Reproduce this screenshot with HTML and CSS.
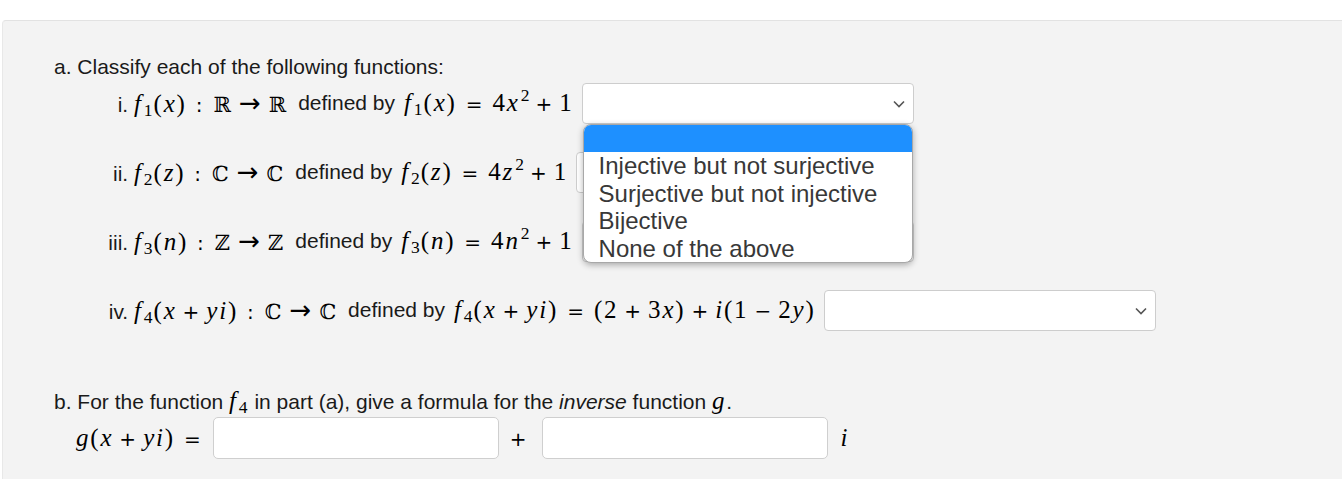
FILE: index.html
```html
<!DOCTYPE html>
<html lang="en">
<head>
    <meta charset="UTF-8">
    <title>Classify functions</title>
    <link rel="stylesheet" href="styles.css">
</head>
<body>
    <div class="panel">
        <p class="part">a. Classify each of the following functions:</p>
        <ol class="funcs">
            <li>
                <div class="row">
                    <span class="math"><i>f</i><sub>1</sub>(<i>x</i>)<span class="rel">:</span><span class="set">ℝ</span><span class="rel arrow">→</span><span class="set">ℝ</span></span>
                    <span class="word">defined by</span>
                    <span class="math"><i>f</i><sub>1</sub>(<i>x</i>)<span class="rel">=</span>4<i>x</i><sup>2</sup><span class="bin">+</span>1</span>
                    <span class="pick">
                        <select class="choice"><option></option></select>
                        <svg class="chev" width="12" height="8" viewBox="0 0 12 8"><path d="M1 1.5l5 5 5-5" fill="none" stroke="#555" stroke-width="1.6"/></svg>
                        <div class="dropdown">
                            <div class="opt active"></div>
                            <div class="opt">Injective but not surjective</div>
                            <div class="opt">Surjective but not injective</div>
                            <div class="opt">Bijective</div>
                            <div class="opt">None of the above</div>
                        </div>
                    </span>
                </div>
            </li>
            <li>
                <div class="row">
                    <span class="math"><i>f</i><sub>2</sub>(<i>z</i>)<span class="rel">:</span><span class="set">ℂ</span><span class="rel arrow">→</span><span class="set">ℂ</span></span>
                    <span class="word">defined by</span>
                    <span class="math"><i>f</i><sub>2</sub>(<i>z</i>)<span class="rel">=</span>4<i>z</i><sup>2</sup><span class="bin">+</span>1</span>
                    <span class="pick">
                        <select class="choice"><option></option></select>
                        <svg class="chev" width="12" height="8" viewBox="0 0 12 8"><path d="M1 1.5l5 5 5-5" fill="none" stroke="#555" stroke-width="1.6"/></svg>
                    </span>
                </div>
            </li>
            <li>
                <div class="row">
                    <span class="math"><i>f</i><sub>3</sub>(<i>n</i>)<span class="rel">:</span><span class="set">ℤ</span><span class="rel arrow">→</span><span class="set">ℤ</span></span>
                    <span class="word">defined by</span>
                    <span class="math"><i>f</i><sub>3</sub>(<i>n</i>)<span class="rel">=</span>4<i>n</i><sup>2</sup><span class="bin">+</span>1</span>
                    <span class="pick">
                        <select class="choice"><option></option></select>
                        <svg class="chev" width="12" height="8" viewBox="0 0 12 8"><path d="M1 1.5l5 5 5-5" fill="none" stroke="#555" stroke-width="1.6"/></svg>
                    </span>
                </div>
            </li>
            <li>
                <div class="row">
                    <span class="math"><i>f</i><sub>4</sub>(<i>x</i><span class="bin">+</span><i>y</i><i>i</i>)<span class="rel">:</span><span class="set">ℂ</span><span class="rel arrow">→</span><span class="set">ℂ</span></span>
                    <span class="word">defined by</span>
                    <span class="math"><i>f</i><sub>4</sub>(<i>x</i><span class="bin">+</span><i>y</i><i>i</i>)<span class="rel">=</span>(2<span class="bin">+</span>3<i>x</i>)<span class="bin">+</span><i>i</i>(1<span class="bin">−</span>2<i>y</i>)</span>
                    <span class="pick">
                        <select class="choice"><option></option></select>
                        <svg class="chev" width="12" height="8" viewBox="0 0 12 8"><path d="M1 1.5l5 5 5-5" fill="none" stroke="#555" stroke-width="1.6"/></svg>
                    </span>
                </div>
            </li>
        </ol>

        <p class="part part-b">b. For the function <span class="math"><i>f</i><sub>4</sub></span> in part (a), give a formula for the <em>inverse</em> function <span class="math"><i>g</i></span>.</p>
        <div class="answer">
            <span class="math"><i>g</i>(<i>x</i><span class="bin">+</span><i>y</i><i>i</i>)<span class="rel">=</span></span>
            <input class="field first" type="text">
            <span class="math"><span class="bin plus">+</span></span>
            <input class="field" type="text">
            <span class="math unit"><i>i</i></span>
        </div>
    </div>
</body>
</html>
```

FILE: styles.css
```css
body {
    margin: 0;
    background-color: white;
    font-family: "Liberation Sans", Arial, sans-serif;
    font-size: 21px;
    color: #1a1a1a;
}
.panel {
    margin: 20px 1px 0 2px;
    padding: 34px 50px 40px 51px;
    background-color: #f3f3f3;
    border-top: 1px solid #e2e2e2;
    border-left: 1px solid #e8e8e8;
    border-top-left-radius: 4px;
    min-height: 420px;
}
.part {
    margin: 0;
    line-height: 24px;
}
.funcs {
    list-style: lower-roman;
    margin: 4px 0 0 0;
    padding-left: 80px;
}
.funcs li {
    margin-bottom: 29px;
}
.row {
    display: flex;
    align-items: center;
    height: 40px;
}
.word {
    margin: 0 9px 0 11px;
}
.math {
    font-family: "Liberation Serif", "DejaVu Serif", serif;
    font-size: 25px;
    letter-spacing: 1.8px;
    color: #000;
    white-space: nowrap;
}
.math i {
    font-style: italic;
}
.math sub {
    font-size: 70%;
    letter-spacing: 0;
    vertical-align: -0.2em;
    line-height: 0;
    margin: 0 1px 0 1px;
}
.math sup {
    font-size: 70%;
    letter-spacing: 0;
    vertical-align: 0.55em;
    line-height: 0;
    margin-left: 1px;
}
.set {
    font-family: "DejaVu Serif", serif;
    font-size: 21px;
    letter-spacing: 0;
    margin: 0 1px;
}
.rel,
.bin {
    font-family: "DejaVu Sans", sans-serif;
    font-size: 20px;
    letter-spacing: 0;
}
.rel {
    padding: 0 10px 0 9px;
}
.bin {
    padding: 0 7px 0 6px;
}
.arrow {
    font-size: 26px;
    padding: 0 7px;
}
.pick {
    position: relative;
    margin-left: 8px;
}
.choice {
    appearance: none;
    -webkit-appearance: none;
    display: block;
    width: 332px;
    height: 41px;
    background-color: white;
    border: 1px solid #cdcdcd;
    border-radius: 4px;
    font-family: inherit;
    font-size: 18px;
}
.chev {
    position: absolute;
    right: 9px;
    top: 17px;
    pointer-events: none;
}
.dropdown {
    position: absolute;
    top: 41px;
    left: 1px;
    width: 330px;
    height: 139px;
    overflow: hidden;
    background-color: white;
    border: 1px solid #a8a8a8;
    border-radius: 8px;
    box-shadow: 0 2px 6px rgba(0, 0, 0, 0.3);
    box-sizing: border-box;
    font-size: 24px;
    color: #383838;
    z-index: 2;
}
.opt {
    height: 27.5px;
    line-height: 27px;
    padding-left: 15px;
    white-space: nowrap;
}
.opt.active {
    background-color: #1e90ff;
}
.part-b {
    margin-top: 59px;
}
.answer {
    display: flex;
    align-items: center;
    margin: 3px 0 0 22px;
}
.field {
    width: 286px;
    height: 42px;
    box-sizing: border-box;
    background-color: white;
    border: 1px solid #cfcfcf;
    border-radius: 5px;
    margin-left: 12px;
}
.field.first {
    margin-left: 2px;
}
.plus {
    padding: 0 4px 0 11px;
}
.unit {
    margin-left: 12px;
}
```
